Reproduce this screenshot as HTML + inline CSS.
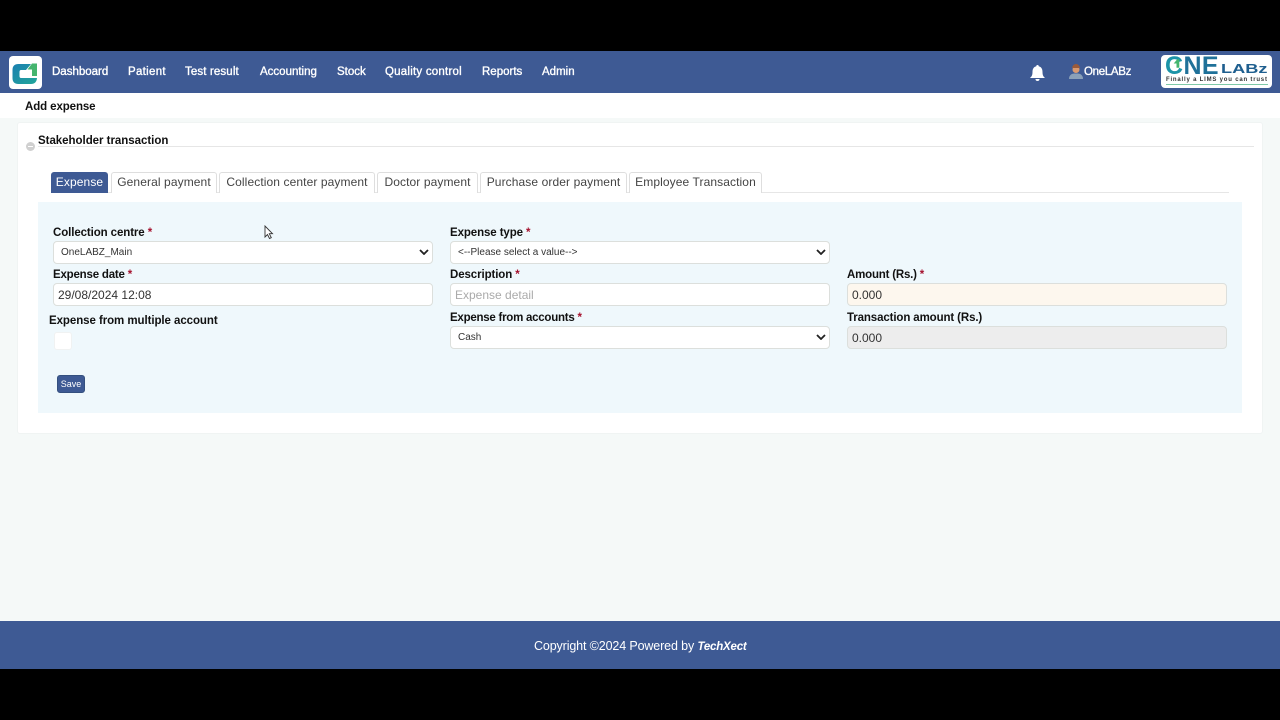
<!DOCTYPE html>
<html><head><meta charset="utf-8"><title>Add expense</title>
<style>
*{box-sizing:border-box}
html,body{margin:0;padding:0;width:1280px;height:720px;overflow:hidden;background:#000;font-family:"Liberation Sans",sans-serif}
.a{position:absolute;white-space:nowrap}
#app{position:absolute;left:0;top:51px;width:1280px;height:618px;background:#f5f9f8}
.nav{color:#fff;font-size:11.5px;font-weight:400;-webkit-text-stroke:.35px #fff;top:64.500px;line-height:14px}
.lbl{color:#111;font-size:11.5px;font-weight:700;line-height:14px;letter-spacing:-.1px;margin-top:1px}
.lbl i{color:#a5122e;font-style:normal}
.box{position:absolute;background:#fff;border:1px solid #dcdfdc;border-radius:4px;height:23px;color:#333;font-size:12px;line-height:22px;padding-left:4px;white-space:nowrap}
.sel{font-size:10px;padding-left:7px;line-height:22px}
.sel svg{position:absolute;right:3px;top:7px}
.tab{position:absolute;top:172px;height:21px;background:#fff;border:1px solid #dedede;border-bottom:0;border-radius:3px 3px 0 0;color:#444;font-size:12px;line-height:18px;text-align:center;white-space:nowrap;letter-spacing:.1px}
</style></head><body>
<div id="app"></div>
<div class="a" style="left:0;top:51px;width:1280px;height:42px;background:#3e5a94"></div>
<div class="a" style="left:0;top:93px;width:1280px;height:25px;background:#fff"></div>
<div class="a" style="left:9px;top:56px;width:33px;height:33px;background:#fff;border-radius:4px"></div>
<svg class="a" style="left:9px;top:56px" width="33" height="33" viewBox="0 0 33 33"><defs><linearGradient id="g" x1="0" y1="0" x2="1" y2="1"><stop offset="0" stop-color="#1a7fb0"/><stop offset="1" stop-color="#22a69a"/></linearGradient></defs><path d="M22 8H9.500Q3.500 8 3.500 14V22Q3.500 28 9.500 28H22Q27.500 28 28 22H12Q10.500 22 10.500 20V16Q10.500 14 12 14H17Z" fill="url(#g)"/><path d="M18.500 13.500L23 7.500H28V20H23V13.500Z" fill="#45b56f"/></svg>
<div class="a nav" style="left:52px">Dashboard</div>
<div class="a nav" style="left:128px;letter-spacing:.3px">Patient</div>
<div class="a nav" style="left:185px;letter-spacing:.13px">Test result</div>
<div class="a nav" style="left:260px">Accounting</div>
<div class="a nav" style="left:337px">Stock</div>
<div class="a nav" style="left:385px;letter-spacing:.23px">Quality control</div>
<div class="a nav" style="left:482px">Reports</div>
<div class="a nav" style="left:542px">Admin</div>
<svg class="a" style="left:1029px;top:64px" width="17" height="18" viewBox="0 0 17 18"><path d="M8.500 1a1.200 1.200 0 0 1 1.200 1.300C12.500 3 13.500 5.300 13.500 8c0 3 .8 4.500 2.500 6H1c1.700-1.500 2.500-3 2.500-6 0-2.700 1-5 3.800-5.700A1.200 1.200 0 0 1 8.500 1z" fill="#fff"/><path d="M6.500 15h4a2 2 0 0 1-4 0z" fill="#fff"/></svg>
<svg class="a" style="left:1068px;top:64px" width="16" height="15" viewBox="0 0 16 15"><path d="M1 15q0-5 5-5.500h4q5 .5 5 5.500z" fill="#8aa0b8"/><circle cx="8" cy="5.500" r="3.500" fill="#d99a70"/><path d="M4 4q1-4 4-4t4 4z" fill="#9a5a3a"/></svg>
<div class="a nav" style="left:1084px;letter-spacing:-.3px">OneLABz</div>
<div class="a" style="left:1161px;top:55px;width:111px;height:33px;background:#fff;border-radius:4px;overflow:hidden">
<div class="a" style="left:4px;top:-2px;font-size:25px;font-weight:700;line-height:26px;color:#1c94a8;letter-spacing:.4px">C<span style="color:#1f7199">NE</span></div>
<svg class="a" style="left:12px;top:4px" width="7" height="9" viewBox="0 0 10 12"><path d="M1 6L6 0H9V12H5V6Z" fill="#45b56f"/></svg>
<div class="a" style="left:60px;top:7px;font-size:13px;font-weight:700;line-height:14px;color:#1f5f8f;transform:scaleX(1.4);transform-origin:left center">LABz</div>
<div class="a" style="left:5px;top:22px;font-size:6px;font-weight:700;line-height:7px;color:#333;letter-spacing:.8px">Finally a LIMS you can trust</div>
<div class="a" style="left:5px;top:28.500px;width:102px;height:1px;background:#7fc9a8"></div>
</div>
<div class="a lbl" style="left:25px;top:99px">Add expense</div>

<div class="a" style="left:17px;top:122px;width:1246px;height:312px;background:#fff;border:1px solid #f0f4f3;border-radius:3px"></div>
<div class="a lbl" style="left:38px;top:133px;letter-spacing:-.03px">Stakeholder transaction</div>
<div class="a" style="left:38px;top:146px;width:1216px;height:1px;background:#e6e6e6"></div>
<div class="a" style="left:26px;top:142px;width:9px;height:9px;border-radius:50%;background:#d0d0d0"></div>
<div class="a" style="left:28px;top:146px;width:5px;height:1px;background:#fff"></div>

<div class="a" style="left:51px;top:192px;width:1178px;height:1px;background:#e6e6e6"></div>
<div class="tab" style="left:51px;width:57px;background:#3e5a94;border-color:#3e5a94;color:#fff">Expense</div>
<div class="tab" style="left:111px;width:106px">General payment</div>
<div class="tab" style="left:219px;width:156px">Collection center payment</div>
<div class="tab" style="left:377px;width:101px">Doctor payment</div>
<div class="tab" style="left:480px;width:147px">Purchase order payment</div>
<div class="tab" style="left:629px;width:133px">Employee Transaction</div>

<div class="a" style="left:38px;top:202px;width:1204px;height:211px;background:#eff8fc"></div>

<div class="a lbl" style="left:53px;top:225px">Collection centre <i>*</i></div>
<div class="box sel" style="left:53px;top:241px;width:380px">OneLABZ_Main<svg width="10" height="6" viewBox="0 0 10 6"><path d="M1 1l4 4 4-4" fill="none" stroke="#222" stroke-width="1.800"/></svg></div>
<div class="a lbl" style="left:450px;top:225px">Expense type <i>*</i></div>
<div class="box sel" style="left:450px;top:241px;width:380px">&lt;--Please select a value--&gt;<svg width="10" height="6" viewBox="0 0 10 6"><path d="M1 1l4 4 4-4" fill="none" stroke="#222" stroke-width="1.800"/></svg></div>

<div class="a lbl" style="left:53px;top:267px;letter-spacing:-.2px">Expense date <i>*</i></div>
<div class="box" style="left:53px;top:283px;width:380px">29/08/2024 12:08</div>
<div class="a lbl" style="left:450px;top:267px">Description <i>*</i></div>
<div class="box" style="left:450px;top:283px;width:380px;color:#aaa">Expense detail</div>
<div class="a lbl" style="left:847px;top:267px;letter-spacing:-.2px">Amount (Rs.) <i>*</i></div>
<div class="box" style="left:847px;top:283px;width:380px;background:#fdf7ee">0.000</div>

<div class="a lbl" style="left:49px;top:312.500px;letter-spacing:-.07px">Expense from multiple account</div>
<div class="a" style="left:54px;top:332px;width:18px;height:18px;background:#fff;border:1px solid #f0f2f2;border-radius:3px"></div>
<div class="a lbl" style="left:450px;top:309.500px;letter-spacing:-.25px">Expense from accounts <i>*</i></div>
<div class="box sel" style="left:450px;top:326px;width:380px;padding-left:7px">Cash<svg width="10" height="6" viewBox="0 0 10 6"><path d="M1 1l4 4 4-4" fill="none" stroke="#222" stroke-width="1.800"/></svg></div>
<div class="a lbl" style="left:847px;top:309.500px;letter-spacing:-.12px">Transaction amount (Rs.)</div>
<div class="box" style="left:847px;top:326px;width:380px;background:#ededed">0.000</div>

<div class="a" style="left:57px;top:375px;width:28px;height:18px;background:#3e5a94;border:1px solid #34507f;border-radius:3px;color:#fff;font-size:9px;line-height:16px;text-align:center">Save</div>

<svg class="a" style="left:264px;top:225px" width="10" height="15" viewBox="0 0 10 15"><path d="M1 1v11l2.500-2.500 2 4 1.800-.8-2-4H8.500z" fill="#fff" stroke="#333" stroke-width=".9"/></svg>

<div class="a" style="left:0;top:621px;width:1280px;height:48px;background:#3e5a94"></div>
<div class="a" style="left:534px;top:638px;width:220px;color:#fff;font-size:12.500px;line-height:16px;letter-spacing:-.13px">Copyright ©2024 Powered by <b style="font-size:11.500px;letter-spacing:-.2px"><i>TechXect</i></b></div>
</body></html>
